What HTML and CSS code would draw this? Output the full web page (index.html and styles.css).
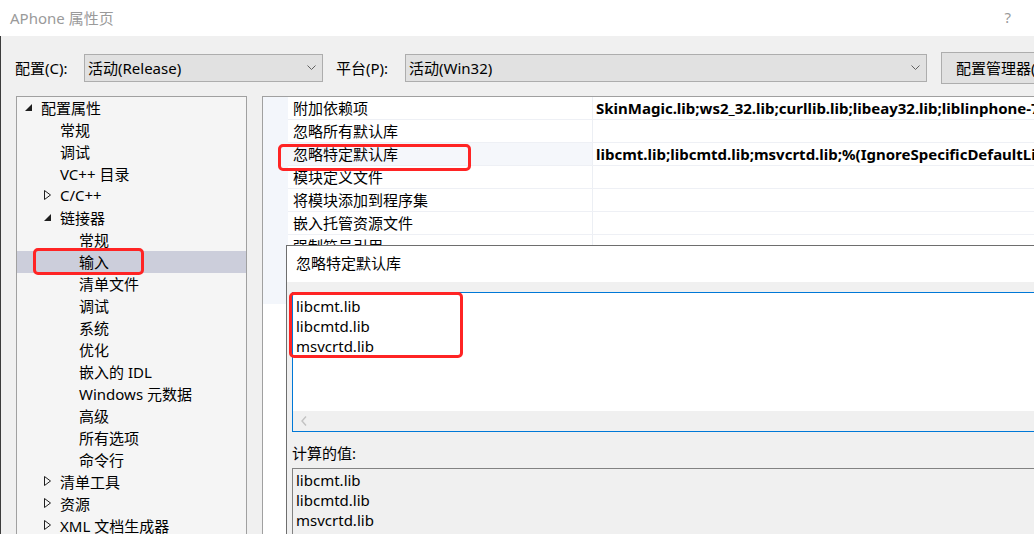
FILE: index.html
```html
<!DOCTYPE html>
<html lang="zh-CN">
<head>
<meta charset="utf-8">
<title>APhone 属性页</title>
<link rel="stylesheet" href="styles.css">
</head>
<body>
<div class="titlebar">
  <span class="title">APhone 属性页</span>
  <span class="help">?</span>
</div>
<div class="client">
  <div class="config-row">
    <label class="cfg-label">配置(C):</label>
    <div class="combo combo-config">
      <span>活动(Release)</span>
      <svg class="chev" width="9" height="5" viewBox="0 0 9 5"><polyline points="0.5,0.5 4.5,4.5 8.5,0.5" fill="none" stroke="#606060" stroke-width="1"/></svg>
    </div>
    <label class="cfg-label plat-label">平台(P):</label>
    <div class="combo combo-platform">
      <span>活动(Win32)</span>
      <svg class="chev" width="9" height="5" viewBox="0 0 9 5"><polyline points="0.5,0.5 4.5,4.5 8.5,0.5" fill="none" stroke="#606060" stroke-width="1"/></svg>
    </div>
    <button class="btn">配置管理器(O)...</button>
  </div>

  <div class="main">
    <div class="tree">
      <div class="node lvl0"><span class="tog"><svg width="7" height="7" viewBox="0 0 7 7"><polygon points="7,0 7,7 0,7" fill="#1e1e1e"/></svg></span>配置属性</div>
      <div class="node lvl1">常规</div>
      <div class="node lvl1">调试</div>
      <div class="node lvl1">VC++ 目录</div>
      <div class="node lvl1t"><span class="tog"><svg width="7" height="10" viewBox="0 0 7 10"><polygon points="0.5,0.5 6.5,5 0.5,9.5" fill="none" stroke="#1e1e1e"/></svg></span>C/C++</div>
      <div class="node lvl1t"><span class="tog"><svg width="7" height="7" viewBox="0 0 7 7"><polygon points="7,0 7,7 0,7" fill="#1e1e1e"/></svg></span>链接器</div>
      <div class="node lvl2">常规</div>
      <div class="node lvl2 selected">输入</div>
      <div class="node lvl2">清单文件</div>
      <div class="node lvl2">调试</div>
      <div class="node lvl2">系统</div>
      <div class="node lvl2">优化</div>
      <div class="node lvl2">嵌入的 IDL</div>
      <div class="node lvl2">Windows 元数据</div>
      <div class="node lvl2">高级</div>
      <div class="node lvl2">所有选项</div>
      <div class="node lvl2">命令行</div>
      <div class="node lvl1t"><span class="tog"><svg width="7" height="10" viewBox="0 0 7 10"><polygon points="0.5,0.5 6.5,5 0.5,9.5" fill="none" stroke="#1e1e1e"/></svg></span>清单工具</div>
      <div class="node lvl1t"><span class="tog"><svg width="7" height="10" viewBox="0 0 7 10"><polygon points="0.5,0.5 6.5,5 0.5,9.5" fill="none" stroke="#1e1e1e"/></svg></span>资源</div>
      <div class="node lvl1t"><span class="tog"><svg width="7" height="10" viewBox="0 0 7 10"><polygon points="0.5,0.5 6.5,5 0.5,9.5" fill="none" stroke="#1e1e1e"/></svg></span>XML 文档生成器</div>
      <div class="mark mark-tree"></div>
    </div>

    <div class="props">
      <div class="grid">
        <div class="gutter"></div>
        <div class="rows">
          <div class="row"><div class="name">附加依赖项</div><div class="value">SkinMagic.lib;ws2_32.lib;curllib.lib;libeay32.lib;liblinphone-7.lib;%(AdditionalDependencies)</div></div>
          <div class="row"><div class="name">忽略所有默认库</div><div class="value"></div></div>
          <div class="row current"><div class="name">忽略特定默认库</div><div class="value">libcmt.lib;libcmtd.lib;msvcrtd.lib;%(IgnoreSpecificDefaultLibraries)</div></div>
          <div class="row"><div class="name">模块定义文件</div><div class="value"></div></div>
          <div class="row"><div class="name">将模块添加到程序集</div><div class="value"></div></div>
          <div class="row"><div class="name">嵌入托管资源文件</div><div class="value"></div></div>
          <div class="row"><div class="name">强制符号引用</div><div class="value"></div></div>
          <div class="row"><div class="name">延迟加载的 DLL</div><div class="value"></div></div>
          <div class="row"><div class="name">程序集链接资源</div><div class="value"></div></div>
        </div>
      </div>
      <div class="mark mark-grid"></div>

      <div class="popup">
        <div class="popup-head">忽略特定默认库</div>
        <div class="popup-body">
          <div class="edit">
            <div class="edit-text">
              <div>libcmt.lib</div>
              <div>libcmtd.lib</div>
              <div>msvcrtd.lib</div>
            </div>
            <div class="hscroll">
              <svg width="6" height="10" viewBox="0 0 6 10"><polyline points="5,0.5 1,5 5,9.5" fill="none" stroke="#c2c2c2" stroke-width="1.4"/></svg>
            </div>
          </div>
          <div class="calc-label">计算的值:</div>
          <div class="calc">
            <div>libcmt.lib</div>
            <div>libcmtd.lib</div>
            <div>msvcrtd.lib</div>
          </div>
        </div>
        <div class="mark mark-edit"></div>
      </div>
    </div>
  </div>
</div>
</body>
</html>
```
FILE: styles.css
```css
* {
  box-sizing: border-box;
}

html,
body {
  margin: 0;
  padding: 0;
}

body {
  width: 1034px;
  height: 534px;
  overflow: hidden;
  background: #f0f0f0;
  font-family: "Noto Sans", "Noto Sans CJK SC", sans-serif;
  font-size: 15px;
  color: #000;
}

/* window caption */
.titlebar {
  height: 36px;
  background: #fff;
  display: flex;
  align-items: center;
  justify-content: space-between;
  padding: 0 23px 2px 10px;
}

.title {
  color: #9a9a9a;
  font-size: 15px;
}

.help {
  color: #9a9a9a;
  font-size: 15px;
}

/* dialog client area */
.client {
  height: 498px;
  border-left: 1px solid #3c3c3c;
  display: flex;
  flex-direction: column;
}

.config-row {
  display: flex;
  align-items: center;
  height: 32px;
  margin-top: 16px;
  padding-left: 14px;
  white-space: nowrap;
}

.cfg-label {
  width: 69px;
  flex: none;
  padding-bottom: 2px;
}

.plat-label {
  margin-left: 13px;
}

.combo {
  height: 28px;
  flex: none;
  background: #e1e1e1;
  border: 1px solid #adadad;
  display: flex;
  align-items: center;
  justify-content: space-between;
  padding: 0 6px 2px 3px;
}

.combo-config {
  width: 239px;
}

.combo-platform {
  width: 522px;
}

.btn {
  flex: none;
  margin-left: 14px;
  height: 32px;
  width: 200px;
  background: #e1e1e1;
  border: 1px solid #adadad;
  font: inherit;
  color: #000;
  text-align: left;
  padding: 0 0 2px 14px;
}

.main {
  display: flex;
  margin-top: 12px;
  padding-left: 15px;
  flex: 1;
}

/* category tree */
.tree {
  position: relative;
  width: 231px;
  flex: none;
  height: 470px;
  background: #f5f5f5;
  border: 1px solid #a0a0a0;
}

.node {
  height: 22px;
  display: flex;
  align-items: center;
  white-space: nowrap;
  padding-bottom: 2px;
}

.tog {
  width: 16px;
  flex: none;
  display: flex;
  align-items: center;
}

.lvl0 {
  padding-left: 8px;
}

.lvl1 {
  padding-left: 43px;
}

.lvl1t {
  padding-left: 27px;
}

.lvl2 {
  padding-left: 62px;
}

.selected {
  background: #cccedb;
}

/* property grid */
.props {
  position: relative;
  margin-left: 15px;
  width: 820px;
  flex: none;
  height: 470px;
  background: #fff;
  border: 1px solid #a0a0a0;
}

.grid {
  display: flex;
}

.gutter {
  width: 25px;
  flex: none;
  background: #f3f6fb;
}

.rows {
  flex: 1;
}

.row {
  display: flex;
  height: 23px;
  border-bottom: 1px solid #eef0f5;
}

.name {
  width: 304px;
  flex: none;
  padding-left: 5px;
  line-height: 22px;
  white-space: nowrap;
}

.current .name {
  background: #f5f7fb;
}

.value {
  flex: 1;
  border-left: 1px solid #eceff4;
  padding-left: 3px;
  line-height: 22px;
  font-weight: 700;
  white-space: nowrap;
  overflow: hidden;
}

/* edit dialog for the selected property */
.popup {
  position: absolute;
  left: 23px;
  top: 148px;
  width: 800px;
  height: 320px;
  background: #f0f0f0;
  border: 1px solid #6e6e6e;
}

.popup-head {
  height: 36px;
  background: #fff;
  display: flex;
  align-items: center;
  padding: 0 0 4px 9px;
}

.popup-body {
  padding: 10px 0 0 5px;
}

.edit {
  height: 140px;
  border: 1px solid #0078d7;
  background: #fff;
  display: flex;
  flex-direction: column;
}

.edit-text {
  flex: 1;
  padding: 3px 3px 0;
  line-height: 20px;
}

.hscroll {
  height: 20px;
  background: #f0f0f0;
  display: flex;
  align-items: center;
  padding-left: 8px;
}

.calc-label {
  margin-top: 11px;
  line-height: 20px;
}

.calc {
  margin-top: 5px;
  height: 120px;
  border: 1px solid #828282;
  background: #f0f0f0;
  padding: 1px 3px 0;
  line-height: 20px;
}

/* red highlight frames */
.mark {
  position: absolute;
  border: 3px solid #ff2424;
  border-radius: 5px;
}

.mark-tree {
  left: 16px;
  top: 151px;
  width: 111px;
  height: 27px;
}

.mark-grid {
  left: 15px;
  top: 47px;
  width: 193px;
  height: 27px;
}

.mark-edit {
  left: 2px;
  top: 46px;
  width: 174px;
  height: 66px;
}
```
